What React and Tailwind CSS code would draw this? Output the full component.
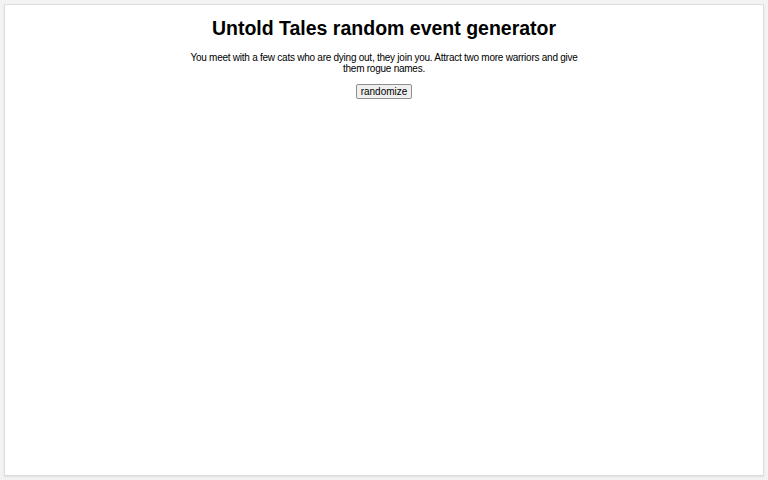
import React, { useState } from "react";

const events = [
  "You meet with a few cats who are dying out, they join you. Attract two more warriors and give them rogue names.",
  "A fox attacks your camp at night. One of your warriors is badly wounded.",
  "A loner wanders onto your territory and asks to join. Give them a clan name.",
  "Greencough spreads through the elders' den. Lose one elder.",
];

const App = () => {
  const [eventText, setEventText] = useState(events[0]);

  const randomize = () => {
    const next = events[Math.floor(Math.random() * events.length)];
    setEventText(next);
  };

  return (
    <div className="h-[480px] bg-[#f3f3f3] p-[4px] font-['Liberation_Sans',Arial,sans-serif]">
      <div className="h-full bg-white border border-[#dcdcdc] shadow-[0_1px_2px_rgba(0,0,0,0.08)] flex flex-col items-center pt-[10px]">
        <h1 className="text-[19.5px] font-bold text-black leading-[26px]">
          Untold Tales random event generator
        </h1>
        <p className="mt-[11px] w-[400px] text-center text-[10px] tracking-[-0.25px] leading-[11px] text-black">
          {eventText}
        </p>
        <button
          className="mt-[10px] px-[4px] h-[15px] text-[10px] leading-[13px] text-black bg-[#f0f0f0] border border-[#8f8f8f] rounded-[2px]"
          onClick={randomize}
        >
          randomize
        </button>
      </div>
    </div>
  );
};

export default App;
